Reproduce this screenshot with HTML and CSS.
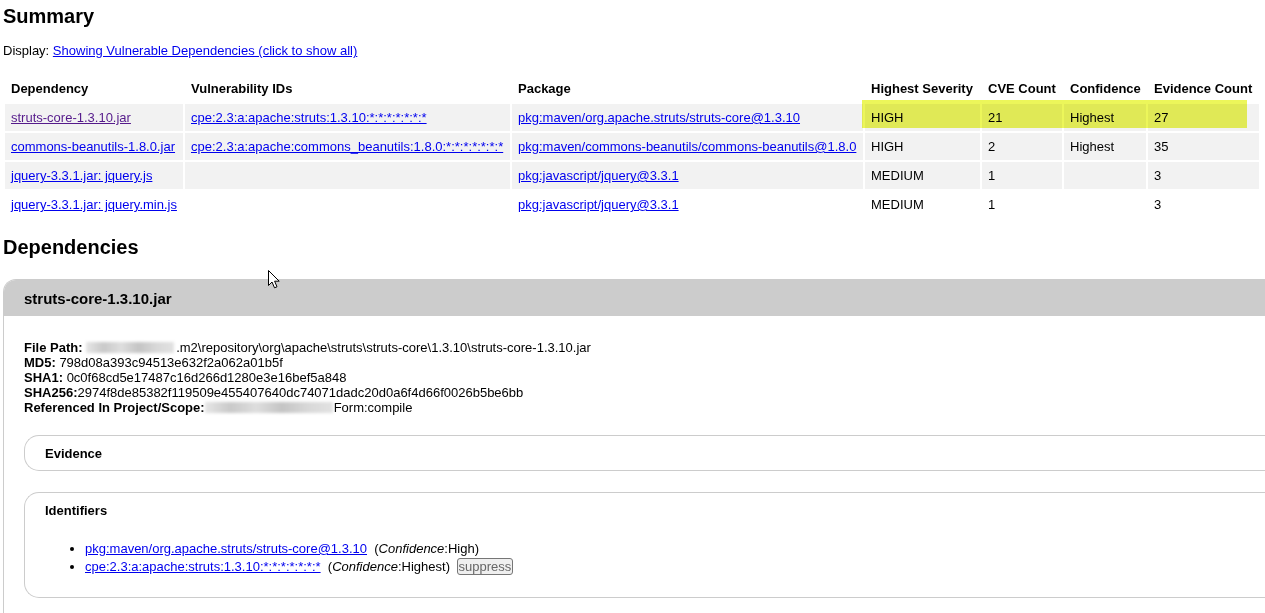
FILE: index.html
```html
<!DOCTYPE html>
<html lang="en">
<head>
<meta charset="utf-8">
<title>Dependency-Check Report</title>
<link rel="stylesheet" href="styles.css">
</head>
<body>
<h2 class="title">Summary</h2>
<p class="display">Display: <a href="#" class="link">Showing Vulnerable Dependencies (click to show all)</a></p>

<table class="summary">
  <colgroup>
    <col class="c1"><col class="c2"><col class="c3"><col class="c4"><col class="c5"><col class="c6"><col class="c7">
  </colgroup>
  <thead>
    <tr>
      <th>Dependency</th>
      <th>Vulnerability IDs</th>
      <th>Package</th>
      <th>Highest Severity</th>
      <th>CVE Count</th>
      <th>Confidence</th>
      <th>Evidence Count</th>
    </tr>
  </thead>
  <tbody>
    <tr class="shade">
      <td><a href="#" class="visited">struts-core-1.3.10.jar</a></td>
      <td><a href="#" class="link">cpe:2.3:a:apache:struts:1.3.10:*:*:*:*:*:*:*</a></td>
      <td><a href="#" class="link">pkg:maven/org.apache.struts/struts-core@1.3.10</a></td>
      <td>HIGH</td>
      <td>21</td>
      <td>Highest</td>
      <td>27</td>
    </tr>
    <tr class="shade">
      <td><a href="#" class="link">commons-beanutils-1.8.0.jar</a></td>
      <td><a href="#" class="link">cpe:2.3:a:apache:commons_beanutils:1.8.0:*:*:*:*:*:*:*</a></td>
      <td><a href="#" class="link">pkg:maven/commons-beanutils/commons-beanutils@1.8.0</a></td>
      <td>HIGH</td>
      <td>2</td>
      <td>Highest</td>
      <td>35</td>
    </tr>
    <tr class="shade">
      <td><a href="#" class="link">jquery-3.3.1.jar: jquery.js</a></td>
      <td></td>
      <td><a href="#" class="link">pkg:javascript/jquery@3.3.1</a></td>
      <td>MEDIUM</td>
      <td>1</td>
      <td></td>
      <td>3</td>
    </tr>
    <tr>
      <td><a href="#" class="link">jquery-3.3.1.jar: jquery.min.js</a></td>
      <td></td>
      <td><a href="#" class="link">pkg:javascript/jquery@3.3.1</a></td>
      <td>MEDIUM</td>
      <td>1</td>
      <td></td>
      <td>3</td>
    </tr>
  </tbody>
</table>

<h2 class="title deps-title">Dependencies</h2>

<section class="dep">
  <div class="dep-head">struts-core-1.3.10.jar</div>
  <div class="dep-body">
    <div class="info">
      <div><b>File Path:</b> <span class="redact rw1"></span>.m2\repository\org\apache\struts\struts-core\1.3.10\struts-core-1.3.10.jar</div>
      <div><b>MD5:</b> 798d08a393c94513e632f2a062a01b5f</div>
      <div><b>SHA1:</b> 0c0f68cd5e17487c16d266d1280e3e16bef5a848</div>
      <div><b>SHA256:</b>2974f8de85382f119509e455407640dc74071dadc20d0a6f4d66f0026b5be6bb</div>
      <div><b>Referenced In Project/Scope:</b><span class="redact rw2"></span>Form:compile</div>
    </div>

    <div class="sub">
      <div class="sub-head">Evidence</div>
    </div>

    <div class="sub">
      <div class="sub-head">Identifiers</div>
      <ul class="ids">
        <li><a href="#" class="link">pkg:maven/org.apache.struts/struts-core@1.3.10</a>&nbsp; (<i>Confidence</i>:High)</li>
        <li><a href="#" class="link">cpe:2.3:a:apache:struts:1.3.10:*:*:*:*:*:*:*</a>&nbsp; (<i>Confidence</i>:Highest) <button class="suppress" type="button">suppress</button></li>
      </ul>
    </div>
  </div>
</section>

<div class="highlight"></div>
<svg class="cursor" width="14" height="21" viewBox="0 0 14 21" aria-hidden="true">
  <path d="M1.5 1.5 L1.5 16.5 L5 13 L7.5 18.8 L10 17.8 L7.6 12.2 L12.2 12.2 Z" fill="#fff" stroke="#000" stroke-width="1" stroke-linejoin="miter"/>
</svg>
</body>
</html>
```

FILE: styles.css
```css
html, body {
  overflow: hidden;
}

body {
  margin: 0;
  padding: 4px 0 0 3px;
  font-family: "Liberation Sans", Arial, Helvetica, sans-serif;
  font-size: 13px;
  line-height: 15px;
  color: #000;
  background: #fff;
  position: relative;
  min-height: 613px;
}

.title {
  margin: 0;
  font-size: 20px;
  line-height: 24px;
  font-weight: bold;
}

.display {
  margin: 15px 0 0 0;
  line-height: 15px;
}

.link {
  color: #0000ee;
  text-decoration: underline;
}

.visited {
  color: #551a8b;
  text-decoration: underline;
}

.summary {
  margin-top: 15px;
  border-collapse: separate;
  border-spacing: 2px;
  table-layout: fixed;
  width: 1258px;
}

.summary col.c1 { width: 178px; }
.summary col.c2 { width: 325px; }
.summary col.c3 { width: 351px; }
.summary col.c4 { width: 115px; }
.summary col.c5 { width: 80px; }
.summary col.c6 { width: 82px; }
.summary col.c7 { width: 111px; }

.summary th,
.summary td {
  height: 27px;
  padding: 0 6px;
  text-align: left;
  vertical-align: middle;
  white-space: nowrap;
  overflow: hidden;
}

.summary th {
  font-weight: bold;
}

.summary tr.shade td {
  background: #f2f2f2;
}

.deps-title {
  margin-top: 15px;
}

.dep {
  margin-top: 20px;
  width: 1300px;
  border: 1px solid #cccccc;
  border-right: none;
  border-bottom: none;
  border-top-left-radius: 13px;
  overflow: hidden;
  min-height: 340px;
}

.dep-head {
  background: #cccccc;
  height: 36px;
  line-height: 38px;
  padding-left: 20px;
  font-size: 15px;
  font-weight: bold;
  overflow: hidden;
}

.dep-body {
  padding: 24px 0 0 20px;
}

.info {
  line-height: 15px;
}

.redact {
  display: inline-block;
  height: 11px;
  vertical-align: -1px;
  background: linear-gradient(90deg, #e6e6e6 0%, #c9c9c9 20%, #dedede 40%, #c4c4c4 60%, #d8d8d8 80%, #e2e2e2 100%);
  filter: blur(1.6px);
}

.rw1 { width: 88px; margin-right: 2px; }
.rw2 { width: 128px; margin: 0 1px 0 0; }

.sub {
  margin-top: 20px;
  border: 1px solid #cccccc;
  border-right: none;
  border-radius: 15px 0 0 15px;
}

.sub + .sub {
  margin-top: 21px;
}

.sub-head {
  height: 34px;
  line-height: 36px;
  padding-left: 20px;
  font-weight: bold;
  overflow: hidden;
}

.ids {
  margin: 13px 0 21px 0;
  padding-left: 60px;
}

.ids li {
  line-height: 18px;
  height: 18px;
}

.suppress {
  font-family: "Liberation Sans", Arial, sans-serif;
  font-size: 13px;
  line-height: 13px;
  color: #666;
  background: #efefef;
  border: 1px solid #767676;
  border-radius: 3px;
  padding: 1px 1px 1px 1px;
  margin: 0 0 0 3px;
  vertical-align: baseline;
}

.highlight {
  position: absolute;
  left: 862px;
  top: 100px;
  width: 385px;
  height: 28px;
  background: rgb(236, 246, 90);
  mix-blend-mode: multiply;
  pointer-events: none;
}

.cursor {
  position: absolute;
  left: 267px;
  top: 269px;
}
```
